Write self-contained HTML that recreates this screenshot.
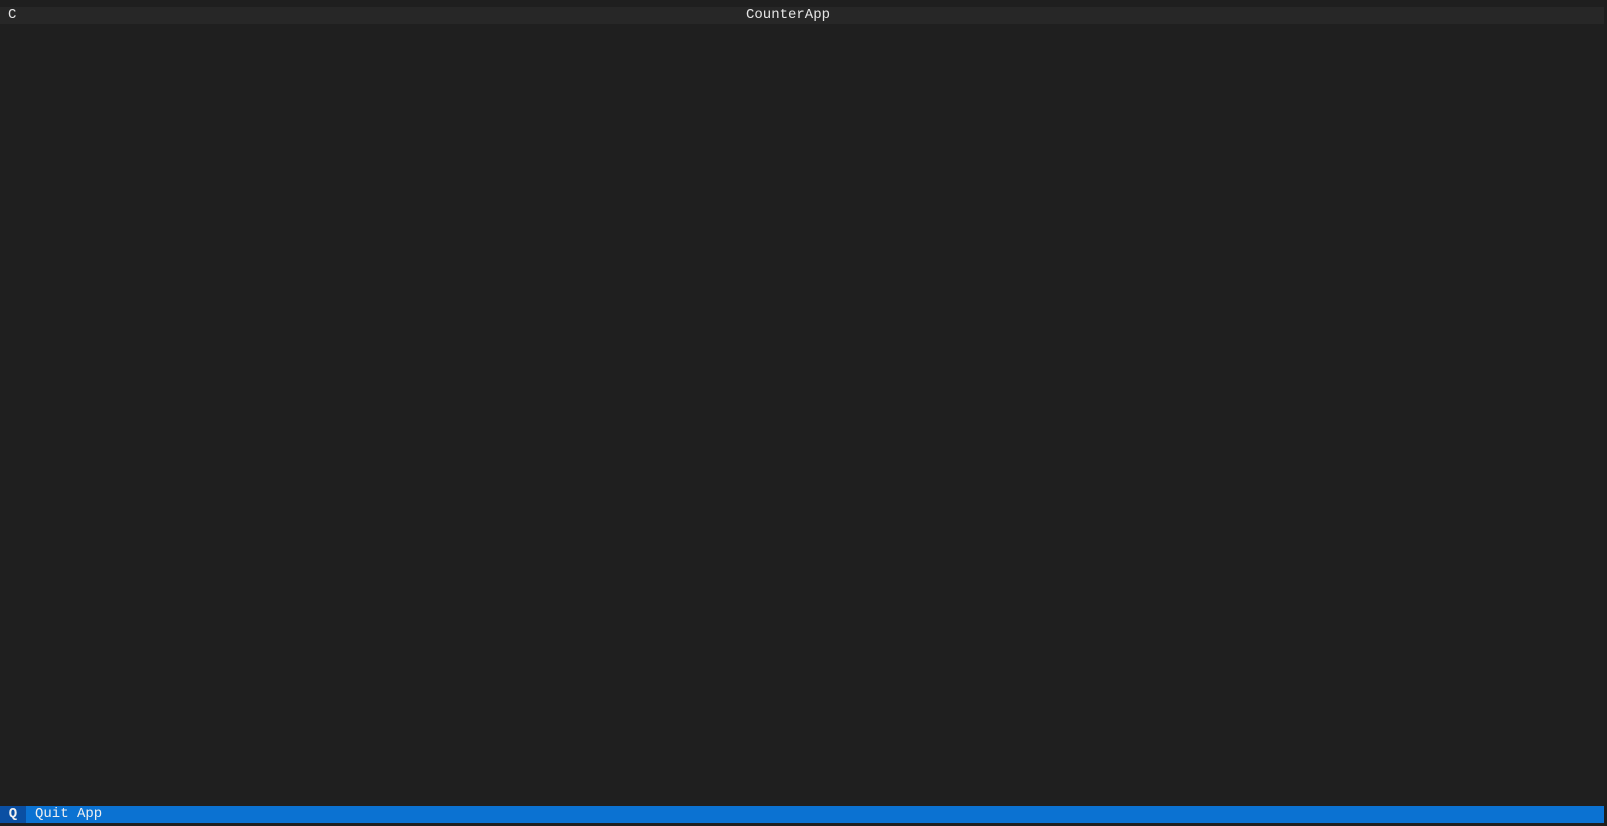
<!DOCTYPE html>
<html><head><meta charset="utf-8"><style>
html,body{margin:0;padding:0;width:1607px;height:826px;background:#1e1e1e;overflow:hidden;font-family:"Liberation Mono",monospace;font-size:14px;}
#app{position:absolute;left:0;top:0;width:1604px;height:826px;background:#1f1f1f;}
.hdr{position:absolute;left:0;top:7px;width:1604px;height:17px;background:#272727;color:#e6e6e6;}
.hdr span{position:absolute;top:0;line-height:17px;white-space:pre;}
.ftr{position:absolute;left:0;top:806px;width:1604px;height:17px;background:#0b72d2;color:#f0f0f0;}
.ftr span{position:absolute;top:0;line-height:17px;white-space:pre;}
.key{left:0;width:26px;background:#0a4fa3;height:17px;text-align:center;font-weight:bold;}
</style></head><body>
<div id="app">
<div class="hdr"><span style="left:8px">C</span><span style="left:746px">CounterApp</span></div>
<div class="ftr"><span class="key">Q</span><span style="left:35px">Quit App</span></div>
</div>
</body></html>
